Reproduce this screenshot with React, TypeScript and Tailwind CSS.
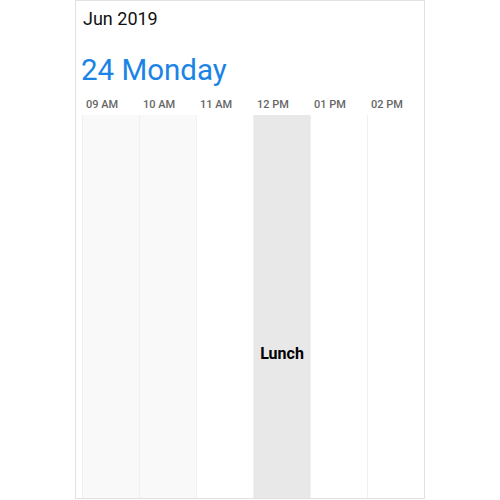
const hours = [
  { label: '09 AM', bg: 'bg-[#f9f9f9]' },
  { label: '10 AM', bg: 'bg-[#f9f9f9]' },
  { label: '11 AM', bg: 'bg-white' },
  { label: '12 PM', bg: 'bg-[#e8e8e8]', title: 'Lunch' },
  { label: '01 PM', bg: 'bg-white' },
  { label: '02 PM', bg: 'bg-white' },
];

export default function App() {
  return (
    <div className="w-[500px] h-[500px] bg-white font-['Roboto',sans-serif]">
      <div className="ml-[75px] w-[350px] h-[499px] border border-[#e2e2e2] flex flex-col">
        {/* header */}
        <div className="pl-[7px] pt-[9px] text-[18px] leading-none text-[#111]">Jun 2019</div>
        <div className="pl-[5px] mt-[28px] text-[29.5px] leading-none text-[#1a84e6]">24 Monday</div>

        {/* time labels */}
        <div className="flex pl-[6px] mt-[13px]">
          {hours.map((h) => (
            <div key={h.label} className="w-[57px] pl-[4px] text-[11px] leading-none font-medium text-[#666]">
              {h.label}
            </div>
          ))}
        </div>

        {/* day columns */}
        <div className="flex flex-1 pl-[6px] mt-[5px]">
          {hours.map((h) => (
            <div key={h.label} className={`w-[57px] border-l border-[#f0f0f0] ${h.bg}`}>
              {h.title && (
                <div className="pt-[231px] text-center text-[16px] leading-none font-bold text-black">
                  {h.title}
                </div>
              )}
            </div>
          ))}
        </div>
      </div>
    </div>
  );
}
